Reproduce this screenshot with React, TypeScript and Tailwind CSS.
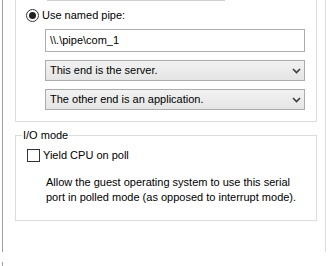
import React from "react";

function Chevron() {
  return (
    <svg width="9" height="6" viewBox="0 0 9 6" className="shrink-0">
      <polyline points="1,1 4.5,4.5 8,1" fill="none" stroke="#3c3c3c" strokeWidth="1.6" />
    </svg>
  );
}

function Select({ value }: { value: string }) {
  return (
    <div className="ml-[29px] w-[260px] h-[21px] border border-[#acacac] bg-gradient-to-b from-[#f2f2f2] to-[#e5e5e5] flex items-center pl-[4px] pr-[3px]">
      <span className="flex-1 truncate">{value}</span>
      <Chevron />
    </div>
  );
}

export default function App() {
  return (
    <div className="w-[328px] h-[266px] bg-white overflow-hidden text-[11px] text-black font-['Liberation_Sans',Arial,sans-serif]">
      {/* Tab page frame */}
      <div className="ml-[2px] w-[324px] h-[252px] border-l border-l-[#a0a0a0] border-r border-r-[#dcdcdc] pl-[12px]">
        {/* Serial port group (top cut off) */}
        <div className="w-[302px] h-[122px] border-l border-r border-b border-[#dcdcdc]">
          <div className="ml-[31px] w-[178px] h-px bg-[#cfcfcf]" />

          <div className="mt-[8px] ml-[10px] h-[13px] flex items-center">
            <span className="w-[13px] h-[13px] rounded-full border border-[#333] bg-white flex items-center justify-center">
              <span className="w-[7px] h-[7px] rounded-full bg-[#222]" />
            </span>
            <span className="ml-[3px]">Use named pipe:</span>
          </div>

          <div className="mt-[7px] ml-[29px] w-[260px] h-[23px] border border-[#abadb3] bg-white flex items-center pl-[4px]">
            \\.\pipe\com_1
          </div>

          <div className="mt-[8px]">
            <Select value="This end is the server." />
          </div>
          <div className="mt-[8px]">
            <Select value="The other end is an application." />
          </div>
        </div>

        {/* I/O mode group */}
        <fieldset className="mt-[6px] w-[302px] h-[93px] border border-[#dcdcdc]">
          <legend className="ml-[6px] px-[1px] leading-[15px]">I/O mode</legend>
          <div className="mt-[6px] ml-[11px] h-[13px] flex items-center">
            <span className="w-[13px] h-[13px] border border-[#333] bg-white" />
            <span className="ml-[3px]">Yield CPU on poll</span>
          </div>
          <p className="mt-[13px] ml-[30px] w-[262px] leading-[15px]">
            Allow the guest operating system to use this serial port in polled mode (as opposed to interrupt mode).
          </p>
        </fieldset>
      </div>
      <div className="ml-[2px] mt-[10px] w-px h-[4px] bg-[#a0a0a0]" />
    </div>
  );
}
